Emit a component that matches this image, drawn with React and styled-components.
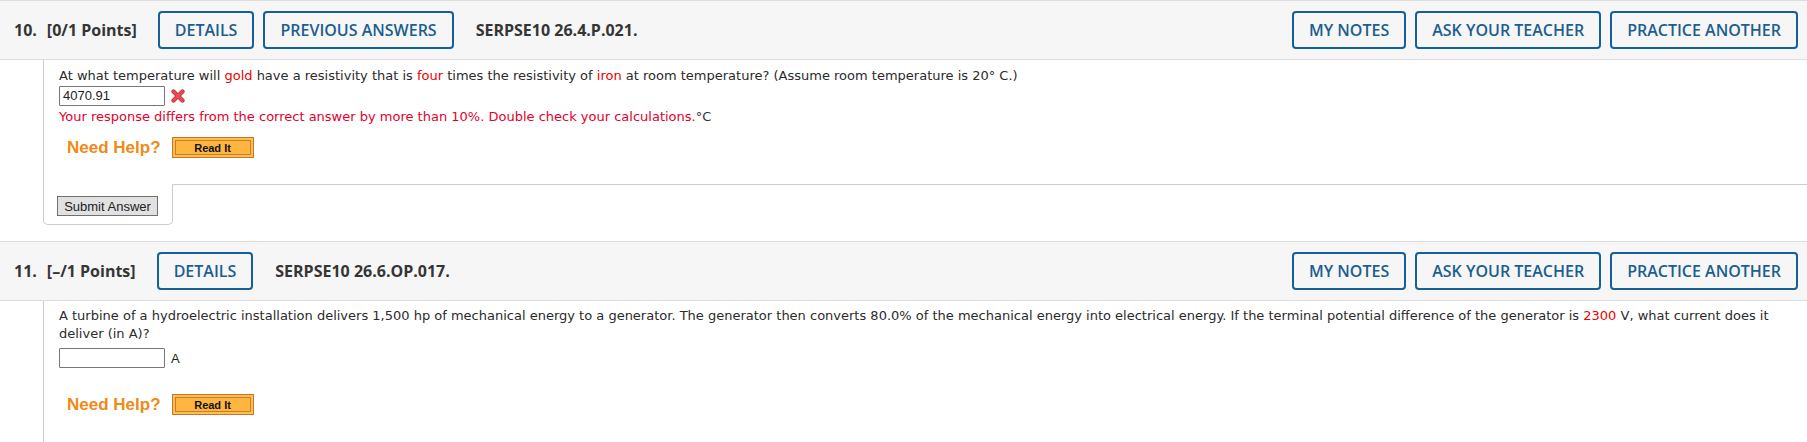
import React from 'react';
import styled, { createGlobalStyle } from 'styled-components';

const GlobalStyle = createGlobalStyle`
  html, body {
    margin: 0;
    padding: 0;
    background: #ffffff;
  }
`;

const Page = styled.div`
  display: flex;
  flex-direction: column;
  min-height: 100vh;
`;

const Question = styled.section`
  display: flex;
  flex-direction: column;
  margin-bottom: ${(p) => (p.$last ? '0' : '16px')};
  flex: ${(p) => (p.$last ? '1' : 'none')};
`;

const Header = styled.div`
  display: flex;
  align-items: center;
  height: 58px;
  padding: 0 9px 0 14px;
  background: #f6f6f6;
  border-top: 1px solid #dcdcdc;
  border-bottom: 1px solid #dcdcdc;
  font-family: 'Open Sans', 'Liberation Sans', sans-serif;
  font-size: 16px;
  color: #353535;
`;

const Num = styled.span`
  font-weight: 700;
  margin-right: 10px;
`;

const Points = styled.span`
  font-weight: 700;
  margin-right: 21px;
`;

const Code = styled.span`
  font-weight: 700;
  margin-left: 22px;
`;

const ButtonGroup = styled.div`
  display: flex;
  gap: 9px;
  margin-left: ${(p) => (p.$right ? 'auto' : '0')};
`;

const HeaderButton = styled.button`
  height: 38px;
  padding: 0 15px;
  border: 2px solid #14609a;
  border-radius: 4px;
  background: transparent;
  font-family: 'Open Sans', 'Liberation Sans', sans-serif;
  font-size: 16px;
  font-weight: 600;
  color: #1c5e90;
  cursor: pointer;
`;

const Body = styled.div`
  display: flex;
  flex-direction: column;
  align-items: flex-start;
  flex: ${(p) => (p.$grow ? '1' : 'none')};
  margin-left: 43px;
  padding: ${(p) => p.$pad || '7px 20px 26px 15px'};
  border-left: 1px solid #cccccc;
  font-family: 'DejaVu Sans', Verdana, sans-serif;
  font-size: 13px;
  line-height: 17.6px;
  color: #2b2b2b;
`;

const Prompt = styled.p`
  margin: 0;
`;

const Hl = styled.span`
  color: #ee0000;
`;

const AnswerRow = styled.div`
  display: flex;
  align-items: center;
  gap: 6px;
  margin-top: ${(p) => p.$mt || '1px'};
`;

const AnswerInput = styled.input`
  box-sizing: border-box;
  width: 106px;
  height: 20px;
  padding: 0 3px;
  border: 1px solid #767676;
  border-radius: 1px;
  font-family: 'Liberation Sans', Arial, sans-serif;
  font-size: 13px;
  color: #222222;
  background: #ffffff;
  outline: none;
`;

const UnitLabel = styled.span`
  font-family: 'Liberation Sans', Arial, sans-serif;
  font-size: 13px;
  color: #222222;
`;

const Feedback = styled.p`
  margin: 2px 0 0;
  color: #e3002c;
`;

const Plain = styled.span`
  color: #333333;
`;

const HelpRow = styled.div`
  display: flex;
  align-items: center;
  gap: 11px;
  margin-top: ${(p) => p.$mt || '12px'};
  padding-left: 8px;
`;

const HelpLabel = styled.span`
  font-family: 'Liberation Sans', Arial, sans-serif;
  font-size: 17px;
  font-weight: 700;
  color: #ef8a16;
`;

const ReadIt = styled.button`
  box-sizing: border-box;
  width: 82px;
  height: 21px;
  padding: 0;
  border: 1px solid #c8761f;
  background: #ffb640;
  box-shadow: inset 0 0 0 2px #ffbe55, inset 0 0 0 3px #c97d26;
  font-family: 'Liberation Sans', Arial, sans-serif;
  font-size: 11px;
  font-weight: 700;
  color: #111111;
  cursor: pointer;
`;

const Footer = styled.div`
  display: flex;
  align-items: flex-start;
`;

const SubmitTab = styled.div`
  box-sizing: border-box;
  width: 130px;
  margin-left: 43px;
  padding: 12px 0 8px 13px;
  border-left: 1px solid #cccccc;
  border-right: 1px solid #cccccc;
  border-bottom: 1px solid #cccccc;
  border-radius: 0 0 5px 5px;
`;

const Filler = styled.div`
  flex: 1;
  border-top: 1px solid #cccccc;
`;

const SubmitButton = styled.button`
  box-sizing: border-box;
  width: 101px;
  height: 20px;
  padding: 0;
  border: 1px solid #707070;
  background: #e1e1e1;
  font-family: 'Liberation Sans', Arial, sans-serif;
  font-size: 13px;
  color: #222222;
  cursor: pointer;
`;

const WrongMark = () => (
  <svg width="14" height="14" viewBox="0 0 14 14" aria-label="incorrect">
    <path d="M2.5 2.5 L11.5 11.5 M11.5 2.5 L2.5 11.5" stroke="#b8232c" strokeWidth="4.2" strokeLinecap="round" />
    <path d="M2.5 2.5 L11.5 11.5 M11.5 2.5 L2.5 11.5" stroke="#ee4a52" strokeWidth="2.8" strokeLinecap="round" />
  </svg>
);

const QuestionHeader = ({ num, points, code, left }) => (
  <Header>
    <Num>{num}</Num>
    <Points>{points}</Points>
    <ButtonGroup>
      {left.map((label) => (
        <HeaderButton key={label}>{label}</HeaderButton>
      ))}
    </ButtonGroup>
    <Code>{code}</Code>
    <ButtonGroup $right>
      <HeaderButton>MY NOTES</HeaderButton>
      <HeaderButton>ASK YOUR TEACHER</HeaderButton>
      <HeaderButton>PRACTICE ANOTHER</HeaderButton>
    </ButtonGroup>
  </Header>
);

const App = () => {
  return (
    <Page>
      <GlobalStyle />

      {/* question 10 */}
      <Question>
        <QuestionHeader
          num="10."
          points="[0/1 Points]"
          code="SERPSE10 26.4.P.021."
          left={['DETAILS', 'PREVIOUS ANSWERS']}
        />
        <Body>
          <Prompt>
            At what temperature will <Hl>gold</Hl> have a resistivity that is <Hl>four</Hl> times the
            resistivity of <Hl>iron</Hl> at room temperature? (Assume room temperature is 20° C.)
          </Prompt>
          <AnswerRow>
            <AnswerInput defaultValue="4070.91" />
            <WrongMark />
          </AnswerRow>
          <Feedback>
            Your response differs from the correct answer by more than 10%. Double check your
            calculations.<Plain>°C</Plain>
          </Feedback>
          <HelpRow>
            <HelpLabel>Need Help?</HelpLabel>
            <ReadIt>Read It</ReadIt>
          </HelpRow>
        </Body>
        <Footer>
          <SubmitTab>
            <SubmitButton>Submit Answer</SubmitButton>
          </SubmitTab>
          <Filler />
        </Footer>
      </Question>

      {/* question 11 */}
      <Question $last>
        <QuestionHeader
          num="11."
          points="[–/1 Points]"
          code="SERPSE10 26.6.OP.017."
          left={['DETAILS']}
        />
        <Body $grow $pad="6px 20px 20px 15px">
          <Prompt>
            A turbine of a hydroelectric installation delivers 1,500 hp of mechanical energy to a
            generator. The generator then converts 80.0% of the mechanical energy into electrical
            energy. If the terminal potential difference of the generator is <Hl>2300</Hl> V, what
            current does it deliver (in A)?
          </Prompt>
          <AnswerRow $mt="6px">
            <AnswerInput />
            <UnitLabel>A</UnitLabel>
          </AnswerRow>
          <HelpRow $mt="26px">
            <HelpLabel>Need Help?</HelpLabel>
            <ReadIt>Read It</ReadIt>
          </HelpRow>
        </Body>
      </Question>
    </Page>
  );
};

export default App;
